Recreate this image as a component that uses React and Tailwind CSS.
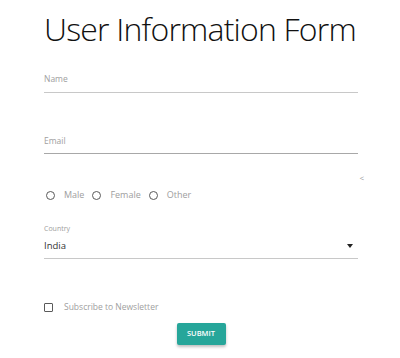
import React, { useState } from "react";

const Radio = ({ label, checked, onChange }) => (
  <label className="flex items-center gap-[9px] cursor-pointer">
    <span className="w-[9px] h-[9px] rounded-full border-[1.5px] border-[#5a5a5a] flex items-center justify-center">
      {checked && <span className="w-[4px] h-[4px] rounded-full bg-[#26a69a]" />}
    </span>
    <input type="radio" className="hidden" checked={checked} onChange={onChange} />
    <span className="text-[9px] text-[#9e9e9e]">{label}</span>
  </label>
);

export default function App() {
  const [gender, setGender] = useState("");
  const [subscribe, setSubscribe] = useState(false);

  return (
    <div className="w-[400px] h-[358px] bg-white font-['Open_Sans',sans-serif] overflow-hidden">
      <div className="pl-[44px] pr-[42px]">
        <h1 className="pt-[8px] text-[32px] leading-[41px] font-light text-[#111] tracking-[-0.8px] whitespace-nowrap">
          User Information Form
        </h1>

        <div className="mt-[24px] pb-[7px] border-b border-[#c8c8c8]">
          <span className="block text-[8.5px] leading-[12px] text-[#a0a0a0]">Name</span>
        </div>

        <div className="mt-[42px] pb-[6px] border-b border-[#a8a8a8]">
          <span className="block text-[8.5px] leading-[12px] text-[#a0a0a0]">Email</span>
        </div>

        <div className="mt-[19px] flex justify-end mr-[-6px] text-[8px] leading-[10px] text-[#999]">&lt;</div>

        <div className="mt-[6px] h-[12px] flex items-center gap-[8px] pl-[2px]">
          <Radio label="Male" checked={gender === "male"} onChange={() => setGender("male")} />
          <Radio label="Female" checked={gender === "female"} onChange={() => setGender("female")} />
          <Radio label="Other" checked={gender === "other"} onChange={() => setGender("other")} />
        </div>

        <div className="mt-[23px] text-[7px] leading-[10px] text-[#9e9e9e]">Country</div>
        <div className="mt-[5px] pb-[5px] border-b border-[#c8c8c8] flex items-center justify-between">
          <span className="text-[9.5px] leading-[14px] text-[#333]">India</span>
          <svg width="6" height="4" viewBox="0 0 6 4" className="mr-[5px]">
            <path d="M0 0h6L3 4z" fill="#222" />
          </svg>
        </div>

        <label className="mt-[42px] h-[12px] flex items-center gap-[11px] cursor-pointer">
          <span className="w-[9px] h-[9px] border-[1.5px] border-[#5a5a5a] rounded-[1px]" />
          <input type="checkbox" className="hidden" checked={subscribe} onChange={() => setSubscribe(!subscribe)} />
          <span className="text-[8.5px] text-[#a0a0a0]">Subscribe to Newsletter</span>
        </label>

        <div className="mt-[10px] flex justify-center">
          <button className="w-[49px] h-[22px] bg-[#26a69a] text-white text-[7.5px] font-semibold rounded-[2px] shadow-[0_2px_3px_rgba(0,0,0,0.25)]">
            SUBMIT
          </button>
        </div>
      </div>
    </div>
  );
}
